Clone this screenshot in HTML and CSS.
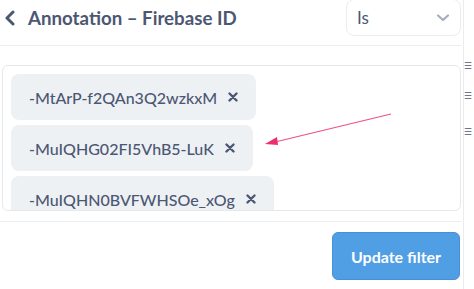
FILE: index.html
```html
<!DOCTYPE html>
<html>
<head>
<meta charset="utf-8">
<link rel="stylesheet" href="styles.css">
</head>
<body>
<div class="page">
  <div class="panel">
    <div class="header">
      <div class="title">
        <svg class="back" width="12" height="16" viewBox="0 0 12 16"><path d="M9 2 L3 8 L9 14" fill="none" stroke="#4c5773" stroke-width="3" stroke-linecap="round" stroke-linejoin="round"/></svg>
        <span>Annotation – Firebase ID</span>
      </div>
      <div class="select">
        <span>Is</span>
        <svg width="14" height="8" viewBox="0 0 14 8"><path d="M2 1.5 L7 6 L12 1.5" fill="none" stroke="#a5aebb" stroke-width="2.2" stroke-linecap="round" stroke-linejoin="round"/></svg>
      </div>
    </div>
    <div class="body">
      <div class="field">
        <div class="chip"><span>-MtArP-f2QAn3Q2wzkxM</span><svg class="x" width="10" height="10" viewBox="0 0 10 10"><path d="M1.5 1.5 L8.5 8.5 M8.5 1.5 L1.5 8.5" stroke="#4c5773" stroke-width="2.4" stroke-linecap="round"/></svg></div>
        <div class="chip"><span>-MuIQHG02FI5VhB5-LuK</span><svg class="x" width="10" height="10" viewBox="0 0 10 10"><path d="M1.5 1.5 L8.5 8.5 M8.5 1.5 L1.5 8.5" stroke="#4c5773" stroke-width="2.4" stroke-linecap="round"/></svg></div>
        <div class="chip"><span>-MuIQHN0BVFWHSOe_xOg</span><svg class="x" width="10" height="10" viewBox="0 0 10 10"><path d="M1.5 1.5 L8.5 8.5 M8.5 1.5 L1.5 8.5" stroke="#4c5773" stroke-width="2.4" stroke-linecap="round"/></svg></div>
      </div>
      <svg class="arrow" width="130" height="40" viewBox="0 0 130 40"><line x1="128" y1="2" x2="12" y2="30" stroke="#ee4f86" stroke-width="1.2"/><path d="M2 32 L14 25 L15 33 Z" fill="#ee2f6f"/></svg>
    </div>
    <div class="footer">
      <button class="btn">Update filter</button>
    </div>
  </div>
  <div class="side">
    <span class="g g1">☰</span>
    <span class="g g2">☰</span>
    <span class="g g3">☰</span>
  </div>
</div>
</body>
</html>
```
FILE: styles.css
```css
html, body {
  margin: 0;
  padding: 0;
  background: #fff;
  font-family: Lato, "Noto Sans", sans-serif;
  color: #4c5773;
}
.page {
  display: flex;
  width: 474px;
  height: 289px;
  overflow: hidden;
}
.panel {
  width: 461px;
  flex: none;
  display: flex;
  flex-direction: column;
}
.header {
  height: 46px;
  border-bottom: 1px solid #eaedf0;
  display: flex;
  justify-content: space-between;
  align-items: flex-start;
  box-sizing: border-box;
}
.title {
  display: flex;
  align-items: center;
  height: 36px;
  padding-left: 4px;
  font-size: 18.7px;
  font-weight: 700;
}
.back {
  margin-right: 12px;
}
.select {
  margin-top: -1px;
  width: 115px;
  height: 37px;
  box-sizing: border-box;
  border: 1px solid #eaedf0;
  border-radius: 8px;
  display: flex;
  align-items: center;
  justify-content: space-between;
  padding: 0 10px 0 10px;
  font-size: 17px;
  font-weight: 400;
}
.body {
  position: relative;
  padding: 19px 0 10px 2px;
  border-bottom: 1px solid #eaedf0;
}
.field {
  height: 146px;
  box-sizing: border-box;
  border: 1px solid #e6e9ec;
  border-radius: 6px;
  padding: 8px;
  display: flex;
  flex-direction: column;
  align-items: flex-start;
  gap: 5px;
  overflow: hidden;
}
.chip {
  flex: none;
  height: 46px;
  box-sizing: border-box;
  background: #eef1f4;
  border-radius: 8px;
  display: flex;
  align-items: center;
  padding: 0 18px 0 18px;
  font-size: 16px;
  font-weight: 500;
}
.x {
  margin-left: 11px;
}
.arrow {
  position: absolute;
  left: 263px;
  top: 66px;
}
.footer {
  display: flex;
  justify-content: flex-end;
  padding-top: 10px;
}
.btn {
  width: 128px;
  height: 48px;
  background: #509ee3;
  border: 1px solid #4a8fd6;
  border-radius: 6px;
  color: #fff;
  font-family: Lato, "Noto Sans", sans-serif;
  font-size: 16px;
  font-weight: 700;
  margin-right: 1px;
}
.side {
  flex: 1;
  border-left: 1px solid #eaedf0;
  margin-left: 2px;
  position: relative;
}
.g {
  position: absolute;
  left: 0;
  font-size: 9px;
  color: #4c5773;
}
.g1 { top: 60px; }
.g2 { top: 90px; }
.g3 { top: 126px; }
```
